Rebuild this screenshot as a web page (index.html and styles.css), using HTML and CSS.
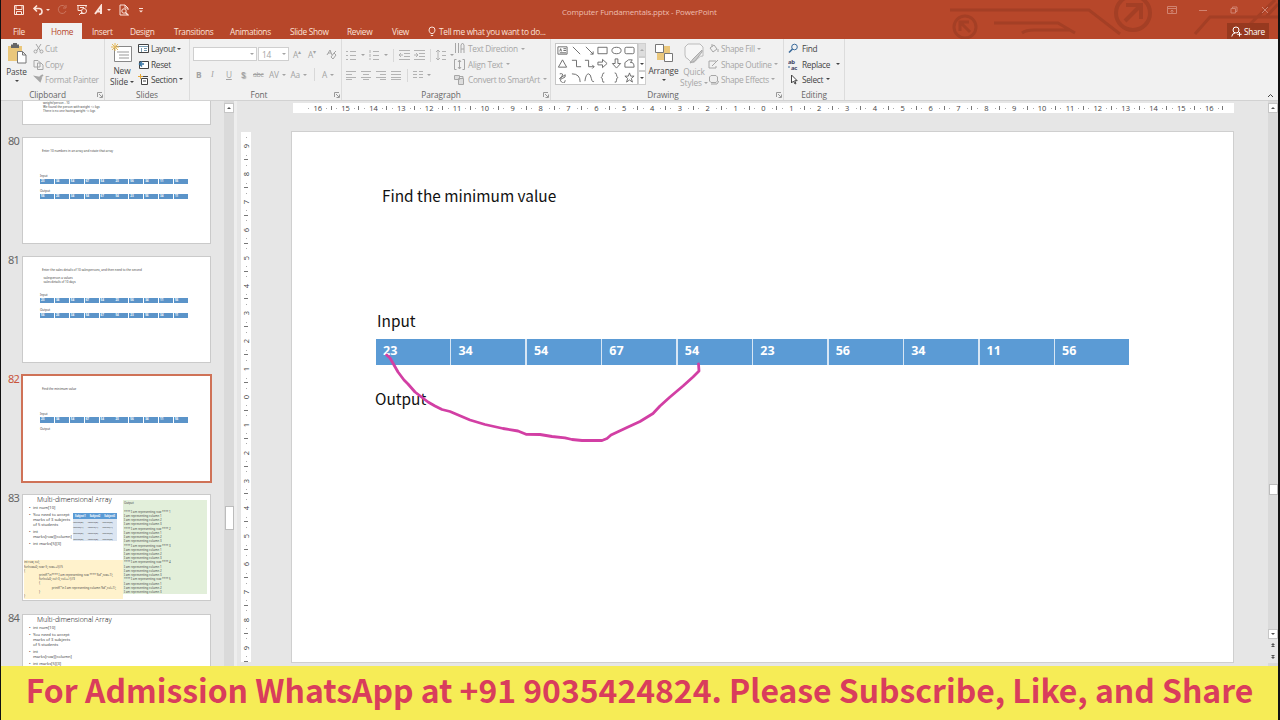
FILE: index.html
```html
<!DOCTYPE html>
<html lang="en">
<head>
  <meta charset="UTF-8">
  <title>Computer Fundamentals.pptx - PowerPoint</title>
  <link rel="stylesheet" href="styles.css">
</head>
<body>
  <div class="app">
    <header class="header">
      <svg class="circuit" width="348" height="39">
        <path d="M20 10H159L190 34M64 23H128L145 33M92 33Q96 30 104 30H140M265 34L280 17H348M318 26L345 0M336 17L348 4"/>
        <circle cx="35" cy="27" r="11"/><path d="M40 32L31 23M30 31V22H39"/>
        <circle cx="203" cy="13" r="17" stroke-width="4"/><path d="M195 21L209 7M196 5H211V19" stroke-width="4"/>
      </svg>
      <div class="title-row">
        <div class="quick">
          <svg width="12" height="12" viewBox="0 0 12 12"><path d="M1.500 1.500h9v9h-9zM3 1.500v4h6v-4M3.500 10.500v-3h5v3"/></svg>
          <svg width="18" height="12" viewBox="0 0 18 12"><path d="M5 1.500L2 4.500l3 3M2 4.500h5q3 0 3 3t-3 3" stroke-width="1.600"/><path class="solid" d="M14 5h4l-2 2z"/></svg>
          <svg class="faded" width="12" height="12" viewBox="0 0 12 12"><path d="M9 2.500A4 4 0 1 0 10 7M10 1v3H7"/></svg>
          <svg width="12" height="12" viewBox="0 0 12 12"><path d="M1 1.500h10M2 1.500v5h3M10 1.500v2M4 3.500h4M5 9.500h3M3 11l3-3"/><circle cx="8" cy="7" r="2.500"/></svg>
          <svg width="20" height="12" viewBox="0 0 20 12"><path d="M2 10L8 2v8M4 7.500h4" stroke-width="2"/><path class="solid" d="M14 5h4l-2 2z"/></svg>
          <svg width="12" height="12" viewBox="0 0 12 12"><path d="M9 11H2V1h5l3 3v2M7 1v3h3"/><circle cx="6" cy="7" r="2.200"/><path d="M7.500 8.500l3 3" stroke-width="1.500"/></svg>
          <svg width="8" height="12" viewBox="0 0 8 12"><path d="M2 4.500h4"/><path class="solid" d="M2 6.500h4l-2 2z"/></svg>
        </div>
        <div class="doc-title">Computer Fundamentals.pptx - PowerPoint</div>
        <div class="window-buttons">
          <svg width="10" height="10" viewBox="0 0 10 10"><path d="M.5 1.500h9v7h-9zM.5 3.500h9M5 8V5M3.500 6.500L5 5l1.500 1.500"/></svg>
          <svg width="10" height="10" viewBox="0 0 10 10"><path d="M1 5.500h8"/></svg>
          <svg width="10" height="10" viewBox="0 0 10 10"><path d="M2 3.500h4.500V8H2zM3.500 3V2H8v4.500H7"/></svg>
          <svg width="10" height="10" viewBox="0 0 10 10"><path d="M2 2l6 6M8 2L2 8"/></svg>
        </div>
      </div>
      <nav class="tabs">
        <a class="tab tab-file">File</a>
        <a class="tab tab-home">Home</a>
        <a class="tab tab-insert">Insert</a>
        <a class="tab tab-design">Design</a>
        <a class="tab tab-transitions">Transitions</a>
        <a class="tab tab-animations">Animations</a>
        <a class="tab tab-show">Slide Show</a>
        <a class="tab tab-review">Review</a>
        <a class="tab tab-view">View</a>
        <a class="tab tab-tell"><svg width="8" height="11" viewBox="0 0 8 11"><path d="M2.800 7.500Q1 5.800 1 4a3 3 0 0 1 6 0q0 1.800-1.800 3.500zM2.800 9.500h2.400"/></svg>Tell me what you want to do...</a>
        <a class="share"><svg width="11" height="11" viewBox="0 0 11 11"><circle cx="5" cy="4" r="3"/><path d="M.8 10.500Q1 7.500 4 7M8.500 6v4.500M6.200 8.300h4.500"/></svg>Share</a>
      </nav>
    </header>

    <div class="ribbon">
      <section class="group clipboard">
        <div class="group-body">
          <div class="big">
            <svg width="20" height="21" viewBox="0 0 20 21" class="no-line"><path d="M1 3h14v15H1z" fill="#eac77b"/><path d="M4 1.500h8V5H4z" fill="#666"/><path d="M6 0h4v3H6z" fill="#666"/><path d="M10.500 8.500h5l3.500 3.500v8h-8.500zM15.500 8.500V12H19" fill="#fff" stroke="#777"/></svg>
            <span>Paste</span><i class="caret"></i>
          </div>
          <div class="list dim">
            <div><svg width="11" height="11" viewBox="0 0 11 11"><path d="M3 1l4.500 7M8 1L3.500 8"/><circle cx="2.500" cy="8.500" r="1.500"/><circle cx="8.500" cy="8.500" r="1.500"/></svg>Cut</div>
            <div><svg width="11" height="11" viewBox="0 0 11 11"><path d="M1 1.500h4l2 2V8H1zM4.500 4H8l2 2v4.500H4.500z" fill="#f1f1f1"/></svg>Copy</div>
            <div><svg width="11" height="11" viewBox="0 0 11 11"><path d="M3 3l4 4 1-3zM7 3l3-2" stroke-width="2"/></svg>Format Painter</div>
          </div>
        </div>
        <div class="label">Clipboard<svg class="launcher" width="6" height="6"><path d="M.5 5V.5H5M2 2l3 3M5.500 2.500v3h-3"/></svg></div>
      </section>
      <section class="group slides">
        <div class="group-body">
          <div class="big">
            <svg width="22" height="20" viewBox="0 0 22 20"><path d="M3.500 3.500h17v15h-17z" fill="#fff" stroke="#888"/><path d="M6 9h12M8 12h10M8 15h10" stroke="#999"/><path d="M4 0v8M0 4h8M1 1l6 6M7 1L1 7" stroke="#e5b95a"/></svg>
            <span>New<br>Slide <i class="caret"></i></span>
          </div>
          <div class="list">
            <div><svg width="11" height="11" viewBox="0 0 11 11"><path d="M.5 1.500h10v8H.5z" fill="#fff"/><path d="M1 3.500h9M3.500 5v4M6 5.500h3M6 7.500h3" stroke="#7799b0"/></svg>Layout <i class="caret"></i></div>
            <div><svg width="11" height="11" viewBox="0 0 11 11"><path d="M1.500 2.500h9v7h-9z" fill="#fff"/><path d="M6 5H2M4 2.500L1.500 5 4 7.500" stroke="#3774a4" stroke-width="1.500"/></svg>Reset</div>
            <div><svg width="11" height="11" viewBox="0 0 11 11"><path d="M3.500 4.500h6v6h-6zM5 7h3M3 2.500h7" fill="#fff"/><path d="M2.500 0v5M0 2.500h5" stroke="#e5a83a"/></svg>Section <i class="caret"></i></div>
          </div>
        </div>
        <div class="label">Slides</div>
      </section>
      <section class="group font">
        <div class="tools row-one">
          <span class="combo name"><i class="caret"></i></span>
          <span class="combo size">14<i class="caret"></i></span>
          <span class="tool">A<sup>▴</sup></span><span class="tool">A<sup>▾</sup></span>
          <svg class="eraser" width="11" height="11" viewBox="0 0 11 11"><path d="M1 6L4 1l2 5M2 4h3M5 8l3-4 2 2-3 4zM8 4l2-2"/></svg>
        </div>
        <div class="tools row-two">
          <b class="tool">B</b><i class="tool serif">I</i><u class="tool">U</u><b class="tool shadowed">S</b><s class="tool small">abc</s>
          <span class="tool wide">AV<i class="caret"></i></span><span class="tool wide">Aa<i class="caret"></i></span>
          <i class="sep"></i><span class="tool wide last">A<i class="caret"></i></span>
        </div>
        <div class="label">Font<svg class="launcher" width="6" height="6"><path d="M.5 5V.5H5M2 2l3 3M5.500 2.500v3h-3"/></svg></div>
      </section>
      <section class="group paragraph">
        <div class="group-body">
          <div class="para-tools">
            <div class="tools">
              <svg width="11" height="10"><path d="M0 1.500h2M0 5.500h2M0 9.500h2M4 1.500h6M4 5.500h6M4 9.500h6"/></svg><i class="caret"></i>
              <svg width="11" height="10"><path d="M1 0v3M1 4v3M1 8v2M4 1.500h6M4 5.500h6M4 9.500h6"/></svg><i class="caret"></i>
              <i class="sep"></i>
              <svg width="11" height="10"><path d="M0 .5h11M5 3.500h6M5 6.500h6M0 9.500h11M4 5H0M2 3L0 5l2 2"/></svg>
              <svg width="11" height="10"><path d="M0 .5h11M5 3.500h6M5 6.500h6M0 9.500h11M0 5h4M2 3l2 2-2 2"/></svg>
              <i class="sep"></i>
              <svg width="10" height="10"><path d="M2 0v10M0 2l2-2 2 2M0 8l2 2 2-2M6 1.500h4M6 5.500h4M6 9.500h4"/></svg><i class="caret"></i>
            </div>
            <div class="tools">
              <svg width="11" height="10"><path d="M0 1.500h10M0 4.500h6M0 7.500h10M0 9.500h6"/></svg>
              <svg width="11" height="10"><path d="M0 1.500h10M2 4.500h6M0 7.500h10M2 9.500h6"/></svg>
              <svg width="11" height="10"><path d="M0 1.500h10M4 4.500h6M0 7.500h10M4 9.500h6"/></svg>
              <svg width="11" height="10"><path d="M0 1.500h10M0 4.500h10M0 7.500h10M0 9.500h10"/></svg>
              <i class="sep"></i>
              <svg width="10" height="10"><path d="M0 1.500h4M0 4.500h4M0 7.500h4M6 1.500h4M6 4.500h4M6 7.500h4"/></svg><i class="caret"></i>
            </div>
          </div>
          <div class="list dim">
            <div><svg width="11" height="11"><path d="M1.500 0v10M4.500 0v10M7 10V2l1.500-2L10 2v8M7 6h3"/></svg>Text Direction <i class="caret"></i></div>
            <div><svg width="11" height="11"><path d="M2.500.5h-2v10h2M8.500.5h2v10h-2M5.500 1v9M4 3l1.500-2L7 3M4 8l1.500 2L7 8"/></svg>Align Text <i class="caret"></i></div>
            <div><svg width="11" height="11"><path d="M.5 1.500h5v4h-5zM4.500 4.500h5v6h-5zM6 2.500h3v2" fill="#ddd"/></svg>Convert to SmartArt <i class="caret"></i></div>
          </div>
        </div>
        <div class="label">Paragraph<svg class="launcher" width="6" height="6"><path d="M.5 5V.5H5M2 2l3 3M5.500 2.500v3h-3"/></svg></div>
      </section>
      <section class="group drawing">
        <div class="group-body">
          <div class="gallery">
            <svg viewBox="0 0 12 12"><path d="M1 2h10v8H1zM3 7l1-3 1 3M7 4h3M7 6h3M3 8.500h7"/></svg>
            <svg viewBox="0 0 12 12"><path d="M2 2l8 8"/></svg>
            <svg viewBox="0 0 12 12"><path d="M2 2l8 8M10 7v3H7"/></svg>
            <svg viewBox="0 0 12 12"><path d="M1 2.500h10v7H1z"/></svg>
            <svg viewBox="0 0 12 12"><ellipse cx="6" cy="6" rx="5" ry="3.500"/></svg>
            <svg viewBox="0 0 12 12"><rect x="1" y="2.500" width="10" height="7" rx="1.500"/></svg>
            <svg viewBox="0 0 12 12"><path d="M6 2l4.500 8h-9z"/></svg>
            <svg viewBox="0 0 12 12"><path d="M1 2.500h5v7h5"/></svg>
            <svg viewBox="0 0 12 12"><path d="M1 2.500h4v7h6M9 7.500l2 2-2 2"/></svg>
            <svg viewBox="0 0 12 12"><path d="M1 4.500h5V1.500L11 6l-5 4.500v-3H1z"/></svg>
            <svg viewBox="0 0 12 12"><path d="M4.500 1h3v5h3L6 11 1.500 6h3z"/></svg>
            <svg viewBox="0 0 12 12"><path d="M1 10V5l4-3h4L7 5q4-1 4 5z"/></svg>
            <svg viewBox="0 0 12 12"><path d="M3 2q5-1 2 3T3 7l6-4q1 3-3 4t-1 4 4-2"/></svg>
            <svg viewBox="0 0 12 12"><path d="M1 2q9 0 9 9"/></svg>
            <svg viewBox="0 0 12 12"><path d="M1 10q1-8 4-8 2 0 3 5t3 3"/></svg>
            <svg viewBox="0 0 12 12"><path d="M8 1Q6 1 6 3T4.500 6Q6 6 6 9t2 2"/></svg>
            <svg viewBox="0 0 12 12"><path d="M4 1q2 0 2 2t1.500 3Q6 6 6 9t-2 2"/></svg>
            <svg viewBox="0 0 12 12"><path d="M6 1l1.300 3.500H11L8 7l1.200 4L6 8.700 2.800 11 4 7 1 4.500h3.700z"/></svg>
          </div>
          <div class="gallery-scroll"><span class="off"><i class="caret up"></i></span><span><i class="caret"></i></span><span><i class="caret"></i></span></div>
          <div class="big arrange">
            <svg width="20" height="20" viewBox="0 0 20 20"><path class="no-line" d="M8 3h8v8H8zM3 9h8v8H3z" fill="#eac77b"/><path d="M1.500 1.500h8v8h-8zM10.500 10.500h8v8h-8z" fill="#fff" stroke="#777"/></svg>
            <span>Arrange</span><i class="caret"></i>
          </div>
          <div class="big styles dim">
            <svg width="20" height="21" viewBox="0 0 20 21"><path d="M4 1h12l3 3v9q-2-1-6 3-3 5-6 3l-3-3q-3-1-3-4V4z" fill="#f6f6f6" stroke="#bbb"/><path d="M18 7L9 16l-3 4 5-2 7-9z" fill="#ccc" stroke="#aaa"/></svg>
            <span>Quick<br>Styles <i class="caret"></i></span>
          </div>
          <div class="list dim">
            <div><svg width="11" height="11"><path d="M2 5l4-3 3 4-4 3zM4 1v3M10 6v3"/></svg>Shape Fill <i class="caret"></i></div>
            <div><svg width="11" height="11"><path d="M8 2H1v7h7V7M4 7l6-6"/></svg>Shape Outline <i class="caret"></i></div>
            <div><svg width="11" height="11"><path d="M3 1.500h5l1.500 1.500v4L8 8.500H3L1.500 7V3zM3 10h6l2-3" fill="#eee"/></svg>Shape Effects <i class="caret"></i></div>
          </div>
        </div>
        <div class="label">Drawing<svg class="launcher" width="6" height="6"><path d="M.5 5V.5H5M2 2l3 3M5.500 2.500v3h-3"/></svg></div>
      </section>
      <section class="group editing">
        <div class="group-body">
          <div class="list">
            <div><svg width="11" height="11"><g stroke="#3a6a9a"><circle cx="6.500" cy="4" r="2.800"/><path d="M4.500 6L1 9.500" stroke-width="1.600"/></g></svg>Find</div>
            <div><svg width="11" height="11" class="ab"><text x="0" y="5">ab</text><text x="3" y="10.500">ac</text><path d="M0 8h2" stroke="#3a6a9a"/></svg>Replace <i class="caret gap"></i></div>
            <div><svg width="11" height="11"><path d="M3.500 1v8l2-2 1.500 3 1-.5L6.700 6.700h2.500z" fill="#fff"/></svg>Select <i class="caret"></i></div>
          </div>
        </div>
        <div class="label">Editing</div>
      </section>
      <svg class="collapse" width="7" height="5"><path d="M1 4l2.500-2.500L6 4"/></svg>
    </div>

    <main class="workspace">
      <aside class="thumbs">
        <div class="item first">
          <span class="num"></span>
          <div class="thumb"><p>weight/person - 10<br>We found the person with weight &lt;= kgs<br>There is no one having weight &lt;= kgs</p></div>
        </div>
        <div class="item">
          <span class="num">80</span>
          <div class="thumb"><p class="head">Enter 10 numbers in an array and rotate that array</p>
            <p class="cap">Input</p><div class="strip" data-v="23 34 54 67 54 23 56 34 11 56"></div>
            <p class="cap out">Output</p><div class="strip" data-v="56 23 34 54 67 54 23 56 34 11"></div></div>
        </div>
        <div class="item">
          <span class="num">81</span>
          <div class="thumb"><p class="head">Enter the sales details of 10 salespersons, and then need to the second<br><br>&nbsp;&nbsp;salesperson a values<br>&nbsp;&nbsp;sales details of 10 days</p>
            <p class="cap">Input</p><div class="strip" data-v="23 34 54 67 54 23 56 34 11 56"></div>
            <p class="cap out">Output</p><div class="strip" data-v="56 23 34 54 67 54 23 56 34 11"></div></div>
        </div>
        <div class="item current">
          <span class="num">82</span>
          <div class="thumb"><p class="head">Find the minimum value</p>
            <p class="cap">Input</p><div class="strip" data-v="23 34 54 67 54 23 56 34 11 56"></div>
            <p class="cap out">Output</p></div>
        </div>
        <div class="item">
          <span class="num">83</span>
          <div class="thumb multi">
            <div class="left">
              <h3>Multi-dimensional Array</h3>
              <div class="cols">
                <ul><li>int num[10]</li><li>You need to accept<br>marks of 3 subjects<br>of 5 students</li><li>int<br>marks[row][column]</li><li>int marks[5][3]</li></ul>
                <table><tr><th>Subject1</th><th>Subject2</th><th>Subject3</th></tr><tr><td>Marks[0]</td><td>Marks[0]</td><td>Marks[0]</td></tr><tr><td>Marks[1]</td><td>Marks[1]</td><td>Marks[1]</td></tr><tr><td>Marks[2]</td><td>Marks[2]</td><td>Marks[2]</td></tr><tr><td>Marks[3]</td><td>Marks[3]</td><td>Marks[3]</td></tr></table>
              </div>
              <pre class="code">int row, col;
for(row=0; row&lt;5; row++){//5
{
                    printf("\n**** I am representing row **** %d",row+1);
                    for(col=0; col&lt;3; col++) {//3
                    {
                                     printf("\n I am representing column %d",col+1);
                    }
}</pre>
            </div>
            <pre class="output"></pre>
          </div>
        </div>
        <div class="item">
          <span class="num">84</span>
          <div class="thumb multi">
            <div class="left">
              <h3>Multi-dimensional Array</h3>
              <div class="cols">
                <ul><li>int num[10]</li><li>You need to accept<br>marks of 3 subjects<br>of 5 students</li><li>int<br>marks[row][column]</li><li>int marks[5][3]</li></ul>
              </div>
            </div>
          </div>
        </div>
      </aside>
      <div class="scroll left-scroll"><span class="arrow"><i class="caret up"></i></span><span class="handle"></span></div>
      <div class="v-side"><div class="ruler vertical" data-max="9"></div></div>
      <div class="canvas">
        <div class="ruler" data-max="16"></div>
        <div class="slide">
          <p class="slide-title">Find the minimum value</p>
          <p class="input">Input</p>
          <div class="array"><span>23</span><span>34</span><span>54</span><span>67</span><span>54</span><span>23</span><span>56</span><span>34</span><span>11</span><span>56</span></div>
          <p class="output-label">Output</p>
          <svg class="ink" width="942" height="530" viewBox="292 132 942 530"><path d="M386.700 355L390 358 394 365 398 372 404 380 408 384 415 392 428 402 435 406 442 409.500 450 411.500 457 414.500 470 420 485 424.500 503 428.500 518 431 526 434.300 540 434.500 552 436.500 565 437.800 572 439.500 582 440.500H602L607 438.500 611 435 627 427.500 640 421.500 653 413.500 660 406 670 397 683 386 693 377 699 371 698.500 364"/></svg>
        </div>
      </div>
      <div class="scroll right-scroll"><span class="arrow"><i class="caret up"></i></span><span class="handle"></span><span class="arrow down"><i class="caret"></i></span><span class="pages"><i class="caret up"></i><i class="caret up"></i></span><span class="pages"><i class="caret"></i><i class="caret"></i></span></div>
    </main>

    <footer class="banner"><span>For Admission WhatsApp at +91 9035424824. Please Subscribe, Like, and Share</span></footer>
  </div>
  <script src="script.js"></script>
</body>
</html>
```

FILE: styles.css
```css
* {
  margin: 0;
  padding: 0;
  box-sizing: border-box;
}
body {
  width: 1280px;
  height: 720px;
  overflow: hidden;
  background: #0b0b0b;
  font-family: "Open Sans", "Noto Sans", sans-serif;
  font-size: 8.3px;
  letter-spacing: -.3px;
  color: #444;
}
svg {
  fill: none;
  stroke: currentColor;
  flex: none;
}
.no-line {
  stroke: none;
}
.app {
  width: 1280px;
  height: 720px;
  border-left: 1px solid #111;
  border-right: 2px solid #111;
  display: flex;
  flex-direction: column;
  overflow: hidden;
}
.caret {
  display: inline-block;
  flex: none;
  border: 2px solid transparent;
  border-top-color: currentColor;
  border-bottom: 0;
  vertical-align: middle;
}
.caret.up {
  border-top: 0;
  border-bottom: 2px solid currentColor;
}

/* title bar and tabs */
.header {
  position: relative;
  height: 39px;
  flex: none;
  background: #b7472a;
  color: #fbe3da;
}
.circuit {
  position: absolute;
  left: 929px;
  top: 0;
  color: #a43f25;
  stroke-width: 3;
}
.title-row {
  position: relative;
  height: 23px;
  display: flex;
}
.quick {
  display: flex;
  align-items: center;
  width: 561px;
  height: 20px;
  padding-left: 12px;
}
.quick svg {
  margin-right: 7px;
}
.quick svg:nth-child(3) {
  margin-left: -1px;
  margin-right: 8px;
}
.quick svg:nth-child(5) {
  margin-left: -2px;
  margin-right: 5px;
}
.quick .solid {
  fill: currentColor;
  stroke: none;
}
.faded {
  opacity: .3;
}
.doc-title {
  width: 600px;
  line-height: 24px;
  font-size: 8px;
  letter-spacing: -.18px;
  color: #eebcae;
}
.window-buttons {
  display: flex;
  height: 20px;
  align-items: center;
  gap: 21px;
  margin-left: 5px;
  color: #d18370;
}
.tabs {
  position: relative;
  display: flex;
  height: 16px;
  line-height: 17px;
  white-space: nowrap;
}
.tab { flex: none; }
.tab-file { width: 41px; padding-left: 12px; }
.tab-home { width: 40px; text-align: center; background: #f1f1f1; color: #b7472a; }
.tab-insert { width: 48px; padding-left: 10px; }
.tab-design { width: 44px; }
.tab-transitions { width: 56px; }
.tab-animations { width: 60px; }
.tab-show { width: 57px; }
.tab-review { width: 45px; }
.tab-view { width: 36px; }
.tab-tell { display: flex; align-items: center; gap: 3px; }
.share {
  display: flex;
  align-items: center;
  gap: 2px;
  width: 42px;
  margin-left: auto;
  margin-right: 9px;
  padding-left: 4px;
  background: #97391f;
  color: #fff;
}

/* ribbon */
.ribbon {
  display: flex;
  height: 62px;
  flex: none;
  background: #f1f1f1;
  border-bottom: 1px solid #d2d2d2;
  white-space: nowrap;
}
.group {
  height: 61px;
  border-right: 1px solid #dcdcdc;
  display: flex;
  flex-direction: column;
}
.group-body {
  display: flex;
  height: 50px;
  padding-top: 2px;
}
.label {
  position: relative;
  margin-top: auto;
  height: 11px;
  line-height: 12px;
  text-align: center;
  letter-spacing: -.1px;
  color: #666;
}
.launcher {
  position: absolute;
  right: 1px;
  top: 3px;
  color: #999;
}
.big {
  display: flex;
  flex-direction: column;
  align-items: center;
  padding-top: 2px;
  text-align: center;
  line-height: 10.500px;
  letter-spacing: -.1px;
}
.big > span { margin-top: 3px; }
.big > .caret { margin-top: 2px; }
.list > div {
  display: flex;
  align-items: center;
  gap: 3px;
  height: 15.4px;
}
.dim {
  color: #a6a6a6;
}
.clipboard { width: 104px; }
.clipboard .big { width: 31px; }
.clipboard .list { padding-left: 1px; }
.clipboard .list > div { gap: 1px; }
.slides { width: 85px; }
.slides .big { width: 33px; padding-left: 1px; }
.slides .list > div { gap: 2px; }
.clipboard .label { padding-right: 10px; }
.slides .label { padding-right: 0; }
.font { width: 152px; padding-left: 3px; }
.font .label { padding-right: 16px; }
.tools {
  display: flex;
  align-items: center;
  color: #a3a3a3;
}
.row-one {
  height: 16px;
  margin-top: 7px;
}
.row-two {
  height: 16px;
  margin-top: 4px;
}
.combo {
  display: flex;
  align-items: center;
  justify-content: flex-end;
  height: 14px;
  padding-right: 2px;
  background: #fff;
  border: 1px solid #cfcfcf;
}
.combo.name { width: 64px; }
.combo.size { width: 31px; margin-left: 1px; padding-left: 3px; justify-content: space-between; margin-right: 1px; }
.tool {
  width: 15px;
  flex: none;
  padding-left: 3px;
}
.tool sup { font-size: 6px; }
.tool.small { font-size: 7px; padding-left: 0; }
.tool.wide { width: 21.5px; padding-left: 1px; }
.tool.wide .caret { margin-left: 3px; }
.tool.last { padding-left: 3px; }
.shadowed { text-shadow: 1px 1px 1px #aaa; }
.serif { font-family: "Liberation Serif", serif; }
.eraser { margin-left: 6px; }
.sep {
  width: 1px;
  height: 13px;
  margin: 0 4px 0 3px;
  background: #d8d8d8;
}
.paragraph { width: 209px; }
.para-tools {
  width: 112px;
  padding: 4px 0 0 4px;
}
.para-tools .tools {
  height: 20px;
  gap: 4px;
}
.para-tools .sep { margin: 0 1px; }
.para-tools svg { stroke-width: .8; }
.paragraph .label { padding-right: 10px; }
.drawing { width: 233px; }
.gallery {
  display: grid;
  grid-template-columns: repeat(6, 13.4px);
  grid-template-rows: repeat(3, 13.3px);
  place-items: center;
  width: 83px;
  height: 42px;
  margin: 2px 0 0 4px;
  border: 1px solid #c6c6c6;
  background: #fff;
  color: #666;
}
.gallery svg { width: 11px; height: 11px; stroke-width: 1; }
.gallery-scroll {
  width: 8px;
  height: 42px;
  margin-top: 2px;
}
.gallery-scroll span {
  display: flex;
  align-items: center;
  justify-content: center;
  height: 14px;
  background: #fff;
  border: 1px solid #cfcfcf;
}
.gallery-scroll .off { background: #ddd; color: #aaa; }
.arrange { width: 33px; margin-left: 1px; }
.styles { width: 28px; }
.drawing .label { padding-right: 8px; }
.drawing .list > div { gap: 2px; }
.editing { width: 61px; }
.editing .list { padding-left: 4px; }
.ab text {
  font: bold 6px "Open Sans", sans-serif;
  fill: #446;
  stroke: none;
}
.gap { margin-left: 3px; }
.collapse {
  margin: 54px 4px 0 auto;
}

/* workspace */
.workspace {
  display: flex;
  height: 565px;
  flex: none;
  background: #e6e6e6;
  letter-spacing: 0;
  overflow: hidden;
}
.thumbs {
  width: 223px;
  overflow: hidden;
}
.item {
  display: flex;
  height: 119.3px;
}
.item.first {
  height: 35.5px;
  align-items: flex-start;
}
.num {
  width: 21px;
  margin-top: -2px;
  padding-left: 7px;
  font: 11px/11px "Noto Sans", sans-serif;
  letter-spacing: -.7px;
  color: #666;
}
.thumb {
  width: 189px;
  height: 107px;
  padding: 0 17px;
  background: #fff;
  border: 1px solid #cacaca;
  font-family: "Noto Sans", sans-serif;
  font-size: 3px;
  line-height: 4.2px;
  color: #444;
  white-space: nowrap;
}
.first .thumb { height: 24px; border-top: 0; padding-left: 20px; }
.current .num { color: #c9543a; }
.current .thumb {
  box-shadow: 0 0 0 1px #cf7257;
  border-color: #cf7257;
}
.head { height: 35px; padding: 11px 0 0 2px; }
.cap { height: 6px; line-height: 6px; }
.cap.out { margin-top: 3.5px; }
.strip {
  display: grid;
  grid-template-columns: repeat(10, 1fr);
  gap: .8px;
  width: 148px;
  height: 5.5px;
  line-height: 5px;
}
.strip span {
  background: #5b94c9;
  color: #fff;
  font-weight: 700;
  padding-left: 1px;
}
.multi {
  display: flex;
  padding: 0 1px;
}
.left { width: 99px; }
.left h3 {
  font: 300 7px/10px "Open Sans", sans-serif;
  padding-left: 13px;
  color: #000;
}
.cols {
  display: flex;
  height: 55px;
}
.cols ul {
  width: 49px;
  flex: none;
  padding-left: 9px;
  list-style: none;
  font-size: 4.1px;
  line-height: 5px;
}
.cols li { margin-bottom: 2px; text-indent: -4px; }
.cols li::before { content: "•"; display: inline-block; width: 4px; text-indent: 0; }
.cols table {
  width: 44px;
  height: 28px;
  margin-top: 8px;
  border-collapse: separate;
  border-spacing: .5px;
  font-size: 2.5px;
  line-height: 4px;
}
.cols th { background: #5b9bd5; color: #fff; }
.cols td { background: #dbe5f1; }
.code {
  height: 39px;
  background: #fff2cc;
  font: 2.9px/4.2px "Noto Sans", sans-serif;
  overflow: hidden;
}
.output {
  width: 84px;
  height: 94px;
  margin-top: 5px;
  padding: 1px;
  background: #e2efda;
  font: 2.9px/4.22px "Noto Sans", sans-serif;
}
.scroll {
  display: flex;
  flex-direction: column;
  align-items: center;
  background: #dadada;
  color: #555;
}
.left-scroll { width: 10px; }
.arrow {
  display: flex;
  align-items: center;
  justify-content: center;
  width: 10px;
  height: 10px;
  margin-top: 2px;
  background: #fff;
  border: 1px solid #c6c6c6;
}
.handle {
  width: 9px;
  height: 24px;
  margin-top: 393px;
  background: #fff;
  border: 1px solid #bcbcbc;
}
.v-side {
  width: 57px;
  padding: 31px 0 0 4px;
  border-left: 3px solid #eee;
}
.canvas { width: 943px; }
.ruler {
  display: flex;
  justify-content: center;
  width: 941px;
  height: 10px;
  margin: 2px 0 18px 2px;
  background: #fff;
  overflow: hidden;
}
.ruler div {
  display: flex;
  flex: none;
  align-items: center;
  justify-content: space-between;
  width: 27.87px;
  font-size: 7.5px;
  line-height: 10px;
}
.ruler div::before,
.ruler div::after {
  content: "";
  width: 1px;
  height: 4px;
  background: #777;
}
.ruler div::before { background: none; }
.ruler i {
  width: 1px;
  height: 1px;
  background: #aaa;
}
.ruler b {
  width: 10px;
  text-align: center;
  font-weight: 400;
}
.ruler.vertical {
  flex-direction: column;
  width: 10px;
  height: 530px;
  margin: 0;
}
.vertical div {
  flex-direction: column;
  width: 10px;
  height: 27.87px;
}
.vertical div::before,
.vertical div::after { width: 4px; height: 1px; }
.vertical b { height: 10px; transform: rotate(-90deg); }
.slide {
  position: relative;
  width: 943px;
  height: 532px;
  background: #fff;
  border: 1px solid #cfcfcf;
  font: 15.4px/20px "Noto Sans CJK SC", "Noto Sans", sans-serif;
  color: #111;
  padding-left: 84px;
}
.slide-title { padding: 53px 0 0 6px; }
.input { padding: 105px 0 0 1px; }
.array {
  display: grid;
  grid-template-columns: repeat(10, 1fr);
  gap: 1.5px;
  width: 753px;
  height: 26px;
  margin-top: 9px;
  background: #d7e6f4;
}
.array span {
  padding-left: 7px;
  background: #5b9bd5;
  color: #fff;
  font: bold 12.5px/24px "Open Sans", sans-serif;
}
.output-label { padding-top: 23px; margin-left: -1px; }
.ink {
  position: absolute;
  left: 0;
  top: 0;
  color: #d23fa4;
  stroke-width: 2.8;
  stroke-linejoin: round;
  stroke-linecap: round;
}
.right-scroll { width: 10px; margin-left: auto; }
.right-scroll .handle { margin-top: 371px; height: 11px; }
.right-scroll .down { margin-top: 134px; }
.pages {
  display: flex;
  flex-direction: column;
  width: 10px;
  align-items: center;
  justify-content: center;
  height: 12px;
  background: #e6e6e6;
}
.banner {
  height: 54px;
  flex: none;
  background: #f6ec56;
  color: #d93d5c;
  text-align: center;
  white-space: nowrap;
  font: bold 31.9px/47px "Noto Sans CJK SC", sans-serif;
  letter-spacing: 0;
}
```

FILE: script.js
```js
// ruler numbers run from max down to 0 and back up
document.querySelectorAll('.ruler').forEach(ruler => {
  const max = Number(ruler.dataset.max);
  for (let n = -max; n <= max; n++) {
    const cell = document.createElement('div');
    cell.innerHTML = '<i></i><b>' + Math.abs(n) + '</b><i></i>';
    ruler.appendChild(cell);
  }
});

document.querySelectorAll('.strip').forEach(strip => {
  strip.innerHTML = strip.dataset.v.split(' ').map(v => '<span>' + v + '</span>').join('');
});

// program output shown on slide 83
let lines = 'Output\n\n';
for (let row = 1; row <= 5; row++) {
  lines += '**** I am representing row **** ' + row + '\n';
  for (let col = 1; col <= 3; col++) {
    lines += 'I am representing column ' + col + '\n';
  }
}
document.querySelector('.output').textContent = lines;
```
